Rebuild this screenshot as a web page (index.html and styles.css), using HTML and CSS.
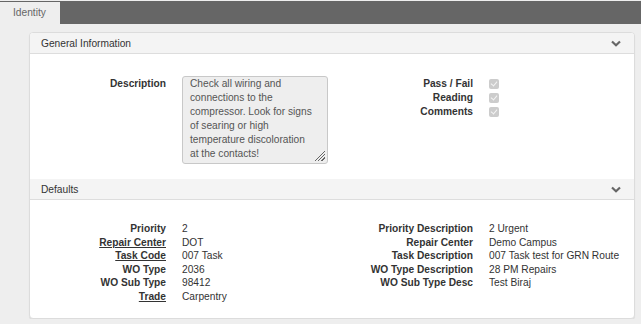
FILE: index.html
```html
<!DOCTYPE html>
<html lang="en">
<head>
    <meta charset="UTF-8">
    <title>Identity</title>
    <link rel="stylesheet" href="styles.css">
</head>
<body>
    <div class="tabbar">
        <div class="tab">Identity</div>
    </div>
    <div class="panel">
        <div class="panel-head">
            <span>General Information</span>
            <svg class="chevron" width="10" height="7" viewBox="0 0 10 7"><path d="M1 1.5 L5 5.2 L9 1.5" fill="none" stroke="#666" stroke-width="2.2"/></svg>
        </div>
        <div class="panel-body general">
            <div class="half">
                <div class="label">Description</div>
                <div class="textbox">Check all wiring and connections to the compressor. Look for signs of searing or high temperature discoloration at the contacts!<span class="grip"></span></div>
            </div>
            <div class="half checks">
                <div class="label">Pass / Fail</div><div><span class="check"></span></div>
                <div class="label">Reading</div><div><span class="check"></span></div>
                <div class="label">Comments</div><div><span class="check"></span></div>
            </div>
        </div>
        <div class="panel-head">
            <span>Defaults</span>
            <svg class="chevron" width="10" height="7" viewBox="0 0 10 7"><path d="M1 1.5 L5 5.2 L9 1.5" fill="none" stroke="#666" stroke-width="2.2"/></svg>
        </div>
        <div class="panel-body defaults">
            <div class="half rows">
                <div class="label">Priority</div><div>2</div>
                <div class="label link">Repair Center</div><div>DOT</div>
                <div class="label link">Task Code</div><div>007 Task</div>
                <div class="label">WO Type</div><div>2036</div>
                <div class="label">WO Sub Type</div><div>98412</div>
                <div class="label link">Trade</div><div>Carpentry</div>
            </div>
            <div class="half rows">
                <div class="label">Priority Description</div><div>2 Urgent</div>
                <div class="label">Repair Center</div><div>Demo Campus</div>
                <div class="label">Task Description</div><div>007 Task test for GRN Route</div>
                <div class="label">WO Type Description</div><div>28 PM Repairs</div>
                <div class="label">WO Sub Type Desc</div><div>Test Biraj</div>
            </div>
        </div>
    </div>
</body>
</html>
```

FILE: styles.css
```css
body {
    margin: 0;
    background: #eeeeee;
    font-family: "Liberation Sans", Arial, sans-serif;
    font-size: 10.2px;
    color: #333;
}
.tabbar {
    margin-top: 1px;
    height: 23px;
    background: #666666;
    display: flex;
}
.tab {
    width: 60px;
    margin-top: 1px;
    background: #eeeeee;
    color: #666;
    padding-left: 13px;
    box-sizing: border-box;
    line-height: 22px;
}
.panel {
    margin: 8px 6px 0 29px;
    background: #fff;
    border: 1px solid #dcdcdc;
    border-radius: 4px;
    box-shadow: 0 1px 1px rgba(0, 0, 0, 0.08);
    overflow: hidden;
}
.panel-head {
    height: 20px;
    background: #f4f4f4;
    border-bottom: 1px solid #dddddd;
    display: flex;
    align-items: center;
    justify-content: space-between;
    padding: 0 13px 0 11px;
    color: #333;
}
.chevron {
    display: block;
}
.panel-body {
    display: flex;
}
.general {
    padding: 22px 0 15px;
}
.defaults {
    padding: 22px 0 14px;
}
.half {
    width: 307px;
    flex-shrink: 0;
    display: grid;
    grid-template-columns: 136px 1fr;
    column-gap: 16px;
    align-content: start;
}
.half + .half {
    flex: 1;
    width: auto;
}
.label {
    font-weight: bold;
    text-align: right;
}
.link {
    text-decoration: underline;
}
.checks {
    grid-auto-rows: 14px;
    line-height: 14px;
    padding-top: 1px;
}
.rows {
    grid-auto-rows: 13.6px;
    line-height: 13.6px;
}
.general .half:first-child .label {
    line-height: 14px;
    padding-top: 1px;
}
.textbox {
    position: relative;
    width: 146px;
    height: 88px;
    box-sizing: border-box;
    background: #eeeeee;
    border: 1px solid #c8c8c8;
    border-radius: 3px;
    padding: 0 12px 0 7px;
    line-height: 14px;
    color: #555;
}
.grip {
    position: absolute;
    right: 2px;
    bottom: 2px;
    width: 10px;
    height: 10px;
    background: linear-gradient(135deg, transparent 0 45%, #666 45% 52%, transparent 52% 62%, #666 62% 69%, transparent 69% 79%, #666 79% 86%, transparent 86%);
}
.check {
    display: inline-block;
    width: 10px;
    height: 10px;
    margin-top: 2px;
    background: #cccccc;
    border-radius: 2px;
    position: relative;
    vertical-align: top;
}
.check::after {
    content: '';
    position: absolute;
    left: 3px;
    top: 1px;
    width: 3px;
    height: 5px;
    border: solid #f4f4f4;
    border-width: 0 1px 1px 0;
    transform: rotate(40deg);
}
```
